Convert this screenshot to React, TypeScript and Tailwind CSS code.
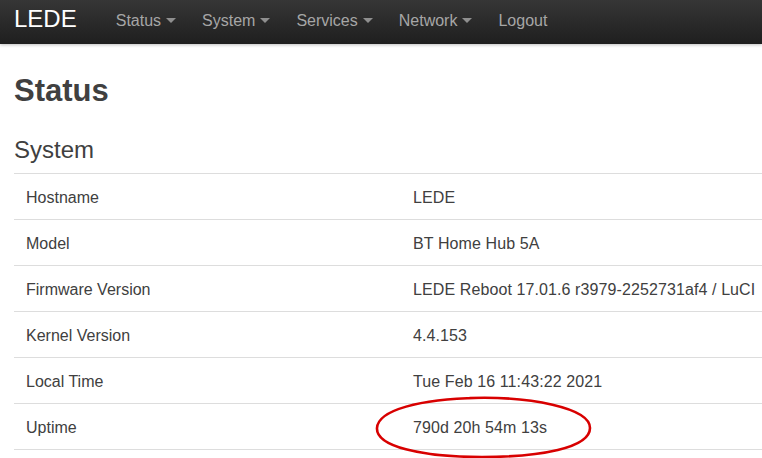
import React from "react";

const rows: [string, string][] = [
  ["Hostname", "LEDE"],
  ["Model", "BT Home Hub 5A"],
  ["Firmware Version", "LEDE Reboot 17.01.6 r3979-2252731af4 / LuCI"],
  ["Kernel Version", "4.4.153"],
  ["Local Time", "Tue Feb 16 11:43:22 2021"],
  ["Uptime", "790d 20h 54m 13s"],
];

function Caret() {
  return (
    <span className="ml-[5px] inline-block h-0 w-0 border-l-[5px] border-r-[5px] border-t-[5px] border-l-transparent border-r-transparent border-t-[#8f8f8f] align-middle" />
  );
}

const navItems = [
  { label: "Status", caret: true },
  { label: "System", caret: true },
  { label: "Services", caret: true },
  { label: "Network", caret: true },
  { label: "Logout", caret: false },
];

export default function App() {
  return (
    <div
      className="relative w-[762px] h-[458px] overflow-hidden bg-white text-[#404040]"
      style={{ fontFamily: '"Liberation Sans", Arial, sans-serif' }}
    >
      <div className="flex h-[44px] items-center bg-gradient-to-b from-[#363636] to-[#1f1f1f] pl-[14px] shadow-[0_1px_3px_rgba(0,0,0,0.25)]">
        <div className="text-[24px] leading-[28px] text-white -mt-[6px]">LEDE</div>
        <div className="ml-[39px] -mt-[3px] flex items-center gap-[26px] text-[16px] leading-[20px] text-[#a6a6a6]">
          {navItems.map((n) => (
            <div key={n.label} className="flex items-center whitespace-nowrap">
              <span>{n.label}</span>
              {n.caret && <Caret />}
            </div>
          ))}
        </div>
      </div>

      <div className="pl-[14px]">
        <h2 className="mt-[30px] text-[31px] font-bold leading-[34px]">Status</h2>
        <h3 className="mt-[29px] text-[24px] leading-[26px]">System</h3>
        <div className="mt-[10px] w-[1000px] border-b border-[#dddddd]">
          {rows.map(([k, v]) => (
            <div key={k} className="flex h-[46px] items-center border-t border-[#dddddd] pt-[2px] text-[16px] leading-[20px] whitespace-nowrap">
              <div className="w-[387px] shrink-0 pl-[12px]">{k}</div>
              <div className="pl-[12px] tracking-[0.1px]">{v}</div>
            </div>
          ))}
        </div>
      </div>

      <svg className="absolute left-0 top-0 pointer-events-none" width="762" height="458" viewBox="0 0 762 458">
        <path
          d="M 470 398 C 530 396, 590 408, 590 428 C 590 448, 540 457, 482 457 C 420 457, 376 446, 377 428 C 378 410, 420 399, 478 398"
          fill="none"
          stroke="#d80000"
          strokeWidth="2.6"
          strokeLinecap="round"
        />
      </svg>
    </div>
  );
}
